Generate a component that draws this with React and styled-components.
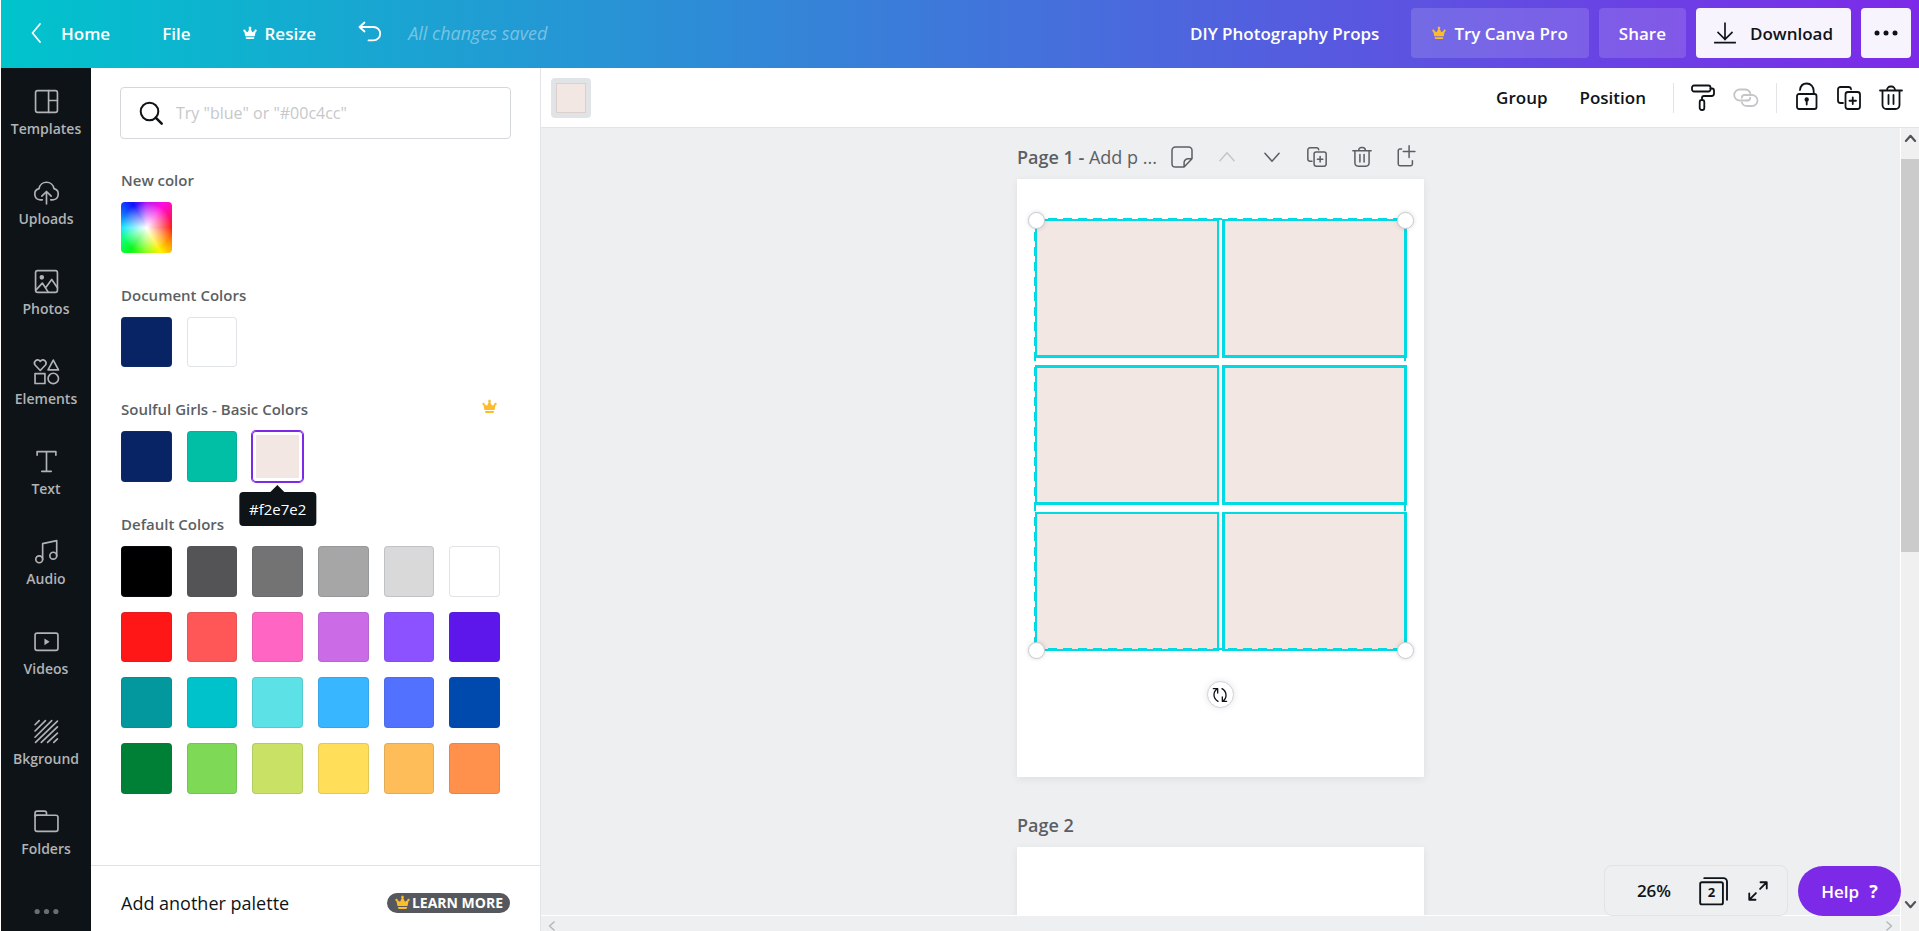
import React, { useState } from "react";
import styled, { createGlobalStyle } from "styled-components";

const GlobalStyle = createGlobalStyle`
  * {
    box-sizing: border-box;
  }
  body {
    margin: 0;
    font-family: "Open Sans", "Noto Sans", sans-serif;
    font-size: 17px;
    color: #0e1318;
    background: #ffffff;
    overflow: hidden;
  }
  button,
  input {
    font: inherit;
    color: inherit;
  }
  button {
    border: 0;
    padding: 0;
    background: none;
    cursor: pointer;
  }
`;

const Shell = styled.div`
  display: flex;
  flex-direction: column;
  height: 100vh;
  padding-left: 1px;
`;

const Header = styled.header`
  display: flex;
  align-items: center;
  justify-content: space-between;
  flex: none;
  height: 68px;
  padding: 0 8px 2px 24px;
  color: white;
  background: linear-gradient(90deg, #00c4cc, #7d2ae8);
`;

const HeaderSide = styled.div`
  display: flex;
  align-items: center;
  gap: ${props => props.gap}px;
`;

const HeaderLink = styled.button`
  display: flex;
  align-items: center;
  gap: ${props => props.gap || 8}px;
  font-weight: 600;
`;

const Saved = styled.span`
  font-size: 18px;
  font-style: italic;
  color: rgba(255, 255, 255, 0.4);
`;

const DocTitle = styled.span`
  font-weight: 600;
  margin-right: 22px;
`;

const HeaderButton = styled.button`
  display: flex;
  align-items: center;
  justify-content: center;
  gap: ${props => props.gap || 8}px;
  height: 50px;
  min-width: 50px;
  padding: 0 ${props => props.pad}px;
  border-radius: 4px;
  font-weight: 600;
  color: ${props => (props.light ? "#0e1318" : "white")};
  background: ${props => (props.light ? "#f8f4fe" : "rgba(255, 255, 255, 0.14)")};
`;

const Body = styled.div`
  display: flex;
  flex: 1;
  min-height: 0;
`;

const Rail = styled.nav`
  display: flex;
  flex-direction: column;
  flex: none;
  width: 90px;
  overflow: hidden;
  background: #0e1318;
`;

const RailItem = styled.button`
  display: flex;
  flex: none;
  flex-direction: column;
  align-items: center;
  gap: 5px;
  height: 90px;
  padding-top: 21px;
  font-size: 14px;
  line-height: 20px;
  font-weight: 600;
  color: ${props => (props.dim ? "#6a6e72" : "#b1b3b5")};
`;

const Panel = styled.aside`
  display: flex;
  flex-direction: column;
  flex: none;
  width: 450px;
  background: white;
  border-right: 1px solid #e2e4e7;
`;

const PanelScroll = styled.div`
  flex: 1;
  min-height: 0;
  padding: 19px 29px 0;
`;

const SearchBox = styled.label`
  display: flex;
  align-items: center;
  gap: 13px;
  height: 52px;
  margin-bottom: 31px;
  padding: 0 18px;
  border: 1px solid #d5d8db;
  border-radius: 4px;
`;

const SearchInput = styled.input`
  flex: 1;
  border: 0;
  outline: 0;
  padding: 0;
  font-size: 16px;
  background: none;
  &::placeholder {
    color: #c6c8cb;
    opacity: 1;
  }
`;

const Section = styled.section`
  width: 380px;
  padding: 0 0 32px 1px;
`;

const SectionHead = styled.div`
  display: flex;
  justify-content: space-between;
  padding: 0 3px 12px 0;
`;

const SectionTitle = styled.h2`
  margin: 0;
  font-size: 15px;
  line-height: 20px;
  font-weight: 600;
  color: #5b5f64;
`;

const Swatches = styled.div`
  display: grid;
  grid-template-columns: repeat(6, 1fr);
  gap: 15px;
`;

const Swatch = styled.button`
  position: relative;
  aspect-ratio: 1;
  border-radius: 4px;
  background: ${props => props.color};
  box-shadow: ${props =>
    props.selected
      ? "0 0 0 1px #7d2ae8, inset 0 0 0 1px #7d2ae8, inset 0 0 0 4px white"
      : "inset 0 0 0 1px rgba(57, 76, 96, 0.15)"};
`;

const Rainbow = styled(Swatch)`
  box-shadow: none;
  background:
    radial-gradient(circle at 50% 50%, white, rgba(255, 255, 255, 0) 70%),
    conic-gradient(
      from 0deg,
      #b514f5,
      #ff0ce0 35deg,
      #ff1060 70deg,
      #ff1a10 90deg,
      #ff9a00 125deg,
      #fff200 150deg,
      #8cff10 180deg,
      #08f81c 215deg,
      #10ff80 245deg,
      #10e8ff 270deg,
      #1070ff 300deg,
      #1010ff 330deg,
      #b514f5
    );
`;

const Tip = styled.span`
  position: absolute;
  z-index: 2;
  top: 61px;
  left: 50%;
  transform: translateX(-50%);
  padding: 6px 10px;
  border-radius: 4px;
  font-size: 15px;
  line-height: 22px;
  color: white;
  background: #0e1318;
  &::before {
    content: "";
    position: absolute;
    left: 50%;
    bottom: 100%;
    transform: translateX(-50%);
    border: 7px solid transparent;
    border-top: 0;
    border-bottom-color: #0e1318;
  }
`;

const PanelFoot = styled.footer`
  display: flex;
  align-items: center;
  justify-content: space-between;
  flex: none;
  height: 66px;
  padding: 8px 30px 0;
  border-top: 1px solid #dfe1e4;
`;

const FootLink = styled.button`
  font-size: 18px;
`;

const LearnMore = styled.a`
  display: flex;
  align-items: center;
  gap: 2px;
  height: 20px;
  padding: 0 7px 0 8px;
  border-radius: 10px;
  font-size: 14px;
  font-weight: 700;
  color: white;
  background: #55595e;
  text-decoration: none;
`;

const Main = styled.main`
  display: flex;
  flex-direction: column;
  flex: 1;
  min-width: 0;
`;

const Toolbar = styled.div`
  display: flex;
  align-items: center;
  justify-content: space-between;
  flex: none;
  height: 60px;
  padding: 0 16px 0 10px;
  border-bottom: 1px solid #e2e4e7;
  background: white;
`;

const CurrentColor = styled.button`
  width: 40px;
  height: 40px;
  border: 5px solid #e1e4e7;
  border-radius: 4px;
  background: #f2e7e2;
  box-shadow: inset 0 0 0 1px #dcd0cf;
`;

const Tools = styled.div`
  display: flex;
  align-items: center;
  gap: 18px;
`;

const TextTools = styled.div`
  display: flex;
  gap: 32px;
  margin-right: 9px;
`;

const TextTool = styled.button`
  font-weight: 600;
`;

const IconTool = styled.button`
  display: flex;
  color: ${props => (props.off ? "#c4c6c8" : "inherit")};
`;

const Divider = styled.span`
  width: 1px;
  height: 30px;
  background: #e2e4e7;
`;

const Stage = styled.div`
  position: relative;
  display: grid;
  grid-template-columns: 1fr 19px;
  grid-template-rows: 1fr 16px;
  flex: 1;
  min-height: 0;
  background: #edeff1;
`;

const Canvas = styled.div`
  display: flex;
  flex-direction: column;
  align-items: center;
  min-height: 0;
  overflow: hidden;
  padding-top: 9px;
`;

const PageBlock = styled.article`
  flex: none;
  width: 407px;
  margin-bottom: 28px;
`;

const PageHead = styled.div`
  display: flex;
  align-items: center;
  justify-content: space-between;
  height: 42px;
  padding: 0 7px 2px 0;
  font-size: 18px;
  font-weight: 600;
  color: #5b5f64;
`;

const PageNote = styled.span`
  font-weight: 400;
`;

const PageTools = styled.div`
  display: flex;
  gap: 25px;
`;

const Paper = styled.div`
  position: relative;
  height: 598px;
  padding: 40px 17px 0 18px;
  background: white;
  box-shadow: 0 2px 8px rgba(14, 19, 24, 0.07);
`;

const Cells = styled.div`
  display: grid;
  grid-template-columns: 184px 185px;
  column-gap: 3px;
  row-gap: 7px;
`;

const Cell = styled.div`
  height: 139px;
  border: 2px solid #00dae2;
  border-bottom-width: 3px;
  background: #f2e7e2;
  &:nth-child(even) {
    border-left-width: 3px;
    border-right-width: 3px;
  }
  &:nth-child(3),
  &:nth-child(4) {
    height: 140px;
    border-top-width: 3px;
  }
  &:nth-child(n + 5) {
    border-bottom-width: 2px;
  }
`;

const dashX = "repeating-linear-gradient(90deg, #00dae2 0 8px, transparent 8px 14px, #00dae2 14px 15px)";
const dashY = "repeating-linear-gradient(180deg, #00dae2 0 8px, transparent 8px 14px, #00dae2 14px 15px)";

const Selection = styled.div`
  position: absolute;
  left: 17px;
  top: 39px;
  width: 372px;
  height: 432px;
  background-image: ${dashX}, ${dashX}, ${dashY}, ${dashY};
  background-size: 100% 2px, 100% 2px, 2px 100%, 2px 100%;
  background-position: top, bottom, left, right;
  background-repeat: no-repeat;
`;

const Handle = styled.span`
  position: absolute;
  width: 17px;
  height: 17px;
  margin: -6px -8px -9px -6px;
  border: 1px solid #c9cbd0;
  border-radius: 50%;
  background: white;
  box-shadow: 0 0 4px rgba(57, 76, 96, 0.2);
  ${props => props.v}: 0;
  ${props => props.h}: 0;
`;

const RotateHandle = styled.button`
  position: absolute;
  left: 50%;
  top: 502px;
  display: flex;
  align-items: center;
  justify-content: center;
  width: 27px;
  height: 27px;
  margin-left: -14px;
  border: 1px solid #d0d2d6;
  border-radius: 50%;
  color: #0e1318;
  background: white;
  box-shadow: 0 0 6px rgba(57, 76, 96, 0.15);
`;

const VScroll = styled.div`
  grid-row: 1 / 3;
  grid-column: 2;
  display: flex;
  flex-direction: column;
  align-items: center;
  justify-content: space-between;
  padding: 4px 0 20px;
  border-left: 1px solid white;
  background: #f0f0f1;
  color: #505357;
`;

const VThumb = styled.span`
  width: 100%;
  height: 393px;
  margin: 14px 0 auto;
  background: #cbcbcc;
`;

const HScroll = styled.div`
  display: flex;
  align-items: center;
  justify-content: space-between;
  padding: 5px 5px 0;
  border-top: 1px solid white;
  background: #eeeff0;
  color: #b4b6b9;
`;

const Floating = styled.div`
  position: absolute;
  right: 18px;
  bottom: 15px;
  display: flex;
  gap: 10px;
`;

const ZoomBar = styled.div`
  display: flex;
  align-items: center;
  gap: 21px;
  height: 51px;
  padding: 0 19px 0 32px;
  border: 1px solid #e0e4e7;
  border-radius: 8px;
  background: #edeff1;
`;

const ZoomValue = styled.button`
  margin-right: 7px;
  font-weight: 600;
`;

const PageCount = styled.button`
  position: relative;
  display: flex;
`;

const CountText = styled.span`
  position: absolute;
  left: 0;
  top: 6px;
  width: 25px;
  text-align: center;
  font-size: 13px;
  line-height: 18px;
  font-weight: 700;
`;

const Help = styled.button`
  display: flex;
  align-items: center;
  justify-content: center;
  gap: 10px;
  width: 103px;
  height: 50px;
  margin-top: 1px;
  border-radius: 25px;
  font-weight: 600;
  color: white;
  background: #7d2ae8;
`;

const HelpMark = styled.span`
  font-size: 18px;
  font-weight: 700;
`;

const icons = {
  back: <path d="M15 3L7.500 12l7.500 9" />,
  undo: <path d="M6.500 1.500L1.500 6l5 4.500M2 6h13.500a6.700 6.700 0 0 1 0 13.400H10.500" />,
  search: <><circle cx="10.500" cy="10.500" r="8.800" /><path d="M16.700 16.700l6 6" strokeWidth="2.600" /></>,
  templates: <><rect x="1.500" y="1.500" width="21" height="21" rx="2" /><path d="M14 1.500v21M14 11h8.500" /></>,
  uploads: <><path d="M8 20H6A5.500 5.500 0 0 1 4.800 9.200 7.300 7.300 0 0 1 19.200 9.200 5.500 5.500 0 0 1 18 20h-2" /><path d="M12 24V12.500M7.500 16.500l4.500-4.500 4.500 4.500" /></>,
  photos: <><rect x="1.500" y="1.500" width="21" height="21" rx="2" /><circle cx="7.500" cy="8" r="1.400" fill="currentColor" /><path d="M2 20l6-6.500 5.500 8.500M11.500 17.500L17 10l5.500 8" /></>,
  elements: <><path d="M6 11L1 5.800C-1 3 3 -1.500 6 2.300 9 -1.500 13 3 11 5.800zM18.500 1L23.500 10.500h-10z" /><rect x="1" y="14" width="9.500" height="9.500" /><circle cx="18.500" cy="18.700" r="5" /></>,
  text: <path d="M3 6V2.500h18V6M12 2.500v19M7.500 21.500h9" />,
  audio: <><circle cx="5" cy="19.500" r="3.300" /><circle cx="18.500" cy="16" r="3.300" /><path d="M8.300 19.500V4.500L21.800 1.500V16" /></>,
  videos: <><rect x="1" y="4" width="22" height="16.500" rx="2" /><path d="M10 9v6.500l5-3.250z" fill="currentColor" stroke="none" /></>,
  background: <path d="M1 5.500L5 1.500M1 11.500L11 1.500M1 17.500L17 1.500M1.500 22.500L22.500 2M7 22.500L22.500 7.500M13 22.500L22.500 13.500M19 22.500L22.500 19" />,
  folders: <><path d="M1 7V4a2 2 0 0 1 2-2h7a2 2 0 0 1 2 2v2" /><rect x="1" y="6" width="22" height="15.500" rx="2" /><path d="M1 6h11" /></>,
  dots: <g fill="currentColor" stroke="none"><circle cx="3" cy="12" r="2.500" /><circle cx="12" cy="12" r="2.500" /><circle cx="21" cy="12" r="2.500" /></g>,
  download: <path d="M12 1.500V19M4.500 11.500l7.500 7.500L19.500 11.500M1 22.500h22" strokeLinecap="square" strokeLinejoin="miter" />,
  roller: <><rect x="0" y="-0.500" width="18.500" height="6" rx="2" /><path d="M18.500 2.500h1.500a2 2 0 0 1 2 2v3a2.500 2.500 0 0 1-2.500 2.500H12a2 2 0 0 0-2 2v1.500" /><rect x="7.700" y="14" width="4.600" height="10" rx="2" /></>,
  link: <><path d="M13.500 14.500H5.700a5.500 5.500 0 0 1 0-11H11a5.500 5.500 0 0 1 5.300 4" /><path d="M10.500 9H18a5.500 5.500 0 0 1 0 11H13a5.500 5.500 0 0 1-5.200-3.500" /><path d="M10.500 9a2.750 2.750 0 0 0-2.700 2.750M13.500 14.500a2.750 2.750 0 0 0 2.700-2.750" /></>,
  lock: <><rect x="2" y="8" width="19.500" height="15" rx="2" /><path d="M5 4C5.500-.500 8.500-2.500 11.700-2.500 15.700-2.500 18.700.500 18.700 5V8M11.700 14.500V18.500" /><circle cx="11.700" cy="13.500" r="1.300" fill="currentColor" /></>,
  copy: <><path d="M6 17H3.500A2.500 2.500 0 0 1 1 14.500v-11A2.500 2.500 0 0 1 3.500 1h8A2.500 2.500 0 0 1 14 3.300" /><rect x="8.500" y="6" width="14.500" height="17" rx="2.500" /><path d="M15.750 11.500v6.500M12.500 14.750h6.500" /></>,
  trash: <><path d="M1 4.500h22M8 4.500V4a3.500 3.500 0 0 1 3.500-3.500h1A3.500 3.500 0 0 1 16 4v.500M3.500 4.500v14.500a4 4 0 0 0 4 4h9a4 4 0 0 0 4-4V4.500M9.500 9v9M14.500 9v9" /></>,
  note: <path d="M24 14V4a4 4 0 0 0-4-4H4a4 4 0 0 0-4 4v16a4 4 0 0 0 4 4h10.500zM24 14h-4.500a5 5 0 0 0-5 5v5" />,
  up: <path d="M3.500 16.500L12 7l8.500 9.500" />,
  down: <path d="M3.500 7.500L12 17l8.500-9.500" />,
  left: <path d="M16 4l-9 8 9 8" />,
  right: <path d="M8 4l9 8-9 8" />,
  addPage: <path d="M5.500 2.500H3.500A2 2 0 0 0 1.500 4.500v16a2 2 0 0 0 2 2h13a2 2 0 0 0 2-2V16.500M14.500-1.500v14M7.500 5.500h14" />,
  rotate: <path d="M9 21.500C1.500 17 1 8 7.500 3M2 2.500h6.500v6.500M15 2.500c7.500 4.500 8 13.500 1.500 18.500M22 21.500h-6.500v-6.500" />,
  pages: <><rect x="1" y="4.500" width="19.500" height="19" rx="1.500" /><path d="M4.500 1h16.500a3 3 0 0 1 3 3V19.500" /></>,
  expand: <path d="M14.500 9.500L22 2M15 1.500h7.500V9M9.500 14.500L2 22M1.500 15v7.500H9" />
};

const Icon = ({ name, size = 24, stroke = 1.5 }) => (
  <svg
    width={size}
    height={size}
    viewBox="0 0 24 24"
    fill="none"
    stroke="currentColor"
    strokeWidth={stroke}
    strokeLinecap="round"
    strokeLinejoin="round"
    overflow="visible"
    aria-hidden="true"
  >
    {icons[name]}
  </svg>
);

const Crown = ({ color = "#fdbc2c", size = 14 }) => (
  <svg width={size} height={size} viewBox="0 0 14 14" fill={color} aria-hidden="true">
    <path d="M2.300 10.300L1.300 5.700A1.100 1.100 0 1 1 2.400 5L4.700 6.200 6.200 3A1.300 1.300 0 1 1 7.800 3L9.300 6.200 11.600 5A1.100 1.100 0 1 1 12.700 5.700L11.700 10.300zM2.800 11.300h8.400V12a1 1 0 0 1-1 1H3.800a1 1 0 0 1-1-1z" />
  </svg>
);

const railItems = [
  ["templates", "Templates"],
  ["uploads", "Uploads"],
  ["photos", "Photos"],
  ["elements", "Elements"],
  ["text", "Text"],
  ["audio", "Audio"],
  ["videos", "Videos"],
  ["background", "Bkground"],
  ["folders", "Folders"]
];

const documentColors = ["#082464", "#ffffff"];
const brandColors = ["#082464", "#00bfa5", "#f2e7e2"];
const defaultColors = [
  "#000000", "#545456", "#737373", "#a6a6a6", "#d9d9d9", "#ffffff",
  "#ff1616", "#ff5757", "#ff66c4", "#cb6ce6", "#8c52ff", "#5e17eb",
  "#03989e", "#00c2cb", "#5ce1e6", "#38b6ff", "#5271ff", "#004aad",
  "#008037", "#7ed957", "#c9e265", "#ffde59", "#ffbd59", "#ff914d"
];

const pageTools = [
  ["note", "Notes"],
  ["up", "Move up"],
  ["down", "Move down"],
  ["copy", "Duplicate page"],
  ["trash", "Delete page"],
  ["addPage", "Add page"]
];

const ColorRow = ({ title, colors, selected, onPick, pro }) => (
  <Section>
    <SectionHead>
      <SectionTitle>{title}</SectionTitle>
      {pro && <Crown size={15} />}
    </SectionHead>
    <Swatches>
      {colors.map(color => (
        <Swatch
          key={color}
          color={color}
          selected={selected === color}
          aria-label={color}
          onClick={() => onPick(color)}
        >
          {selected === color && <Tip>{color}</Tip>}
        </Swatch>
      ))}
    </Swatches>
  </Section>
);

const App = () => {
  const [brand, setBrand] = useState("#f2e7e2");
  const [query, setQuery] = useState("");
  const noop = () => {};

  return (
    <Shell>
      <GlobalStyle />
      <Header>
        <HeaderSide gap={42}>
          <HeaderSide gap={52}>
            <HeaderLink gap={12}>
              <Icon name="back" stroke={1.8} />
              Home
            </HeaderLink>
            <HeaderLink>File</HeaderLink>
            <HeaderLink>
              <Crown color="white" />
              Resize
            </HeaderLink>
          </HeaderSide>
          <HeaderSide gap={26}>
            <HeaderLink aria-label="Undo">
              <Icon name="undo" stroke={1.8} />
            </HeaderLink>
            <Saved>All changes saved</Saved>
          </HeaderSide>
        </HeaderSide>
        <HeaderSide gap={10}>
          <DocTitle>DIY Photography Props</DocTitle>
          <HeaderButton pad={21}>
            <Crown />
            Try Canva Pro
          </HeaderButton>
          <HeaderButton pad={20}>Share</HeaderButton>
          <HeaderButton light pad={18} gap={14}>
            <Icon name="download" size={22} stroke={1.8} />
            Download
          </HeaderButton>
          <HeaderButton light pad={0} aria-label="More">
            <Icon name="dots" />
          </HeaderButton>
        </HeaderSide>
      </Header>
      <Body>
        <Rail>
          {railItems.map(([icon, label]) => (
            <RailItem key={label}>
              <Icon name={icon} size={25} stroke={1.6} />
              {label}
            </RailItem>
          ))}
          <RailItem dim aria-label="More">
            <Icon name="dots" size={25} />
          </RailItem>
        </Rail>
        <Panel>
          <PanelScroll>
            <SearchBox>
              <Icon name="search" stroke={2} />
              <SearchInput
                aria-label="Search colors"
                placeholder={'Try "blue" or "#00c4cc"'}
                value={query}
                onChange={e => setQuery(e.target.value)}
              />
            </SearchBox>
            <Section>
              <SectionHead>
                <SectionTitle>New color</SectionTitle>
              </SectionHead>
              <Swatches>
                <Rainbow aria-label="New color" />
              </Swatches>
            </Section>
            <ColorRow title="Document Colors" colors={documentColors} onPick={noop} />
            <ColorRow
              title="Soulful Girls - Basic Colors"
              colors={brandColors}
              selected={brand}
              onPick={setBrand}
              pro
            />
            <ColorRow title="Default Colors" colors={defaultColors} onPick={noop} />
          </PanelScroll>
          <PanelFoot>
            <FootLink>Add another palette</FootLink>
            <LearnMore href="#learn">
              <Crown size={15} />
              LEARN MORE
            </LearnMore>
          </PanelFoot>
        </Panel>
        <Main>
          <Toolbar>
            <CurrentColor aria-label="Color" />
            <Tools>
              <TextTools>
                <TextTool>Group</TextTool>
                <TextTool>Position</TextTool>
              </TextTools>
              <Divider />
              <IconTool aria-label="Copy style">
                <Icon name="roller" stroke={1.8} />
              </IconTool>
              <IconTool off aria-label="Link">
                <Icon name="link" stroke={1.8} />
              </IconTool>
              <Divider />
              <IconTool aria-label="Lock">
                <Icon name="lock" stroke={1.8} />
              </IconTool>
              <IconTool aria-label="Duplicate">
                <Icon name="copy" stroke={1.8} />
              </IconTool>
              <IconTool aria-label="Delete">
                <Icon name="trash" stroke={1.8} />
              </IconTool>
            </Tools>
          </Toolbar>
          <Stage>
            <Canvas>
              <PageBlock>
                <PageHead>
                  <span>
                    Page 1 - <PageNote>Add p ...</PageNote>
                  </span>
                  <PageTools>
                    {pageTools.map(([icon, label]) => (
                      <IconTool key={icon} off={icon === "up"} aria-label={label}>
                        <Icon name={icon} size={20} stroke={1.8} />
                      </IconTool>
                    ))}
                  </PageTools>
                </PageHead>
                <Paper>
                  <Cells>
                    {[1, 2, 3, 4, 5, 6].map(n => (
                      <Cell key={n} />
                    ))}
                  </Cells>
                  <Selection>
                    <Handle v="top" h="left" />
                    <Handle v="top" h="right" />
                    <Handle v="bottom" h="left" />
                    <Handle v="bottom" h="right" />
                  </Selection>
                  <RotateHandle aria-label="Rotate">
                    <Icon name="rotate" size={16} stroke={2} />
                  </RotateHandle>
                </Paper>
              </PageBlock>
              <PageBlock>
                <PageHead>Page 2</PageHead>
                <Paper />
              </PageBlock>
            </Canvas>
            <VScroll>
              <Icon name="up" size={13} stroke={4} />
              <VThumb />
              <Icon name="down" size={13} stroke={4} />
            </VScroll>
            <HScroll>
              <Icon name="left" size={12} stroke={3} />
              <Icon name="right" size={12} stroke={3} />
            </HScroll>
            <Floating>
              <ZoomBar>
                <ZoomValue>26%</ZoomValue>
                <PageCount aria-label="Pages">
                  <Icon name="pages" size={28} stroke={1.6} />
                  <CountText>2</CountText>
                </PageCount>
                <IconTool aria-label="Full screen">
                  <Icon name="expand" size={20} stroke={2.2} />
                </IconTool>
              </ZoomBar>
              <Help>
                Help <HelpMark>?</HelpMark>
              </Help>
            </Floating>
          </Stage>
        </Main>
      </Body>
    </Shell>
  );
};

export default App;
